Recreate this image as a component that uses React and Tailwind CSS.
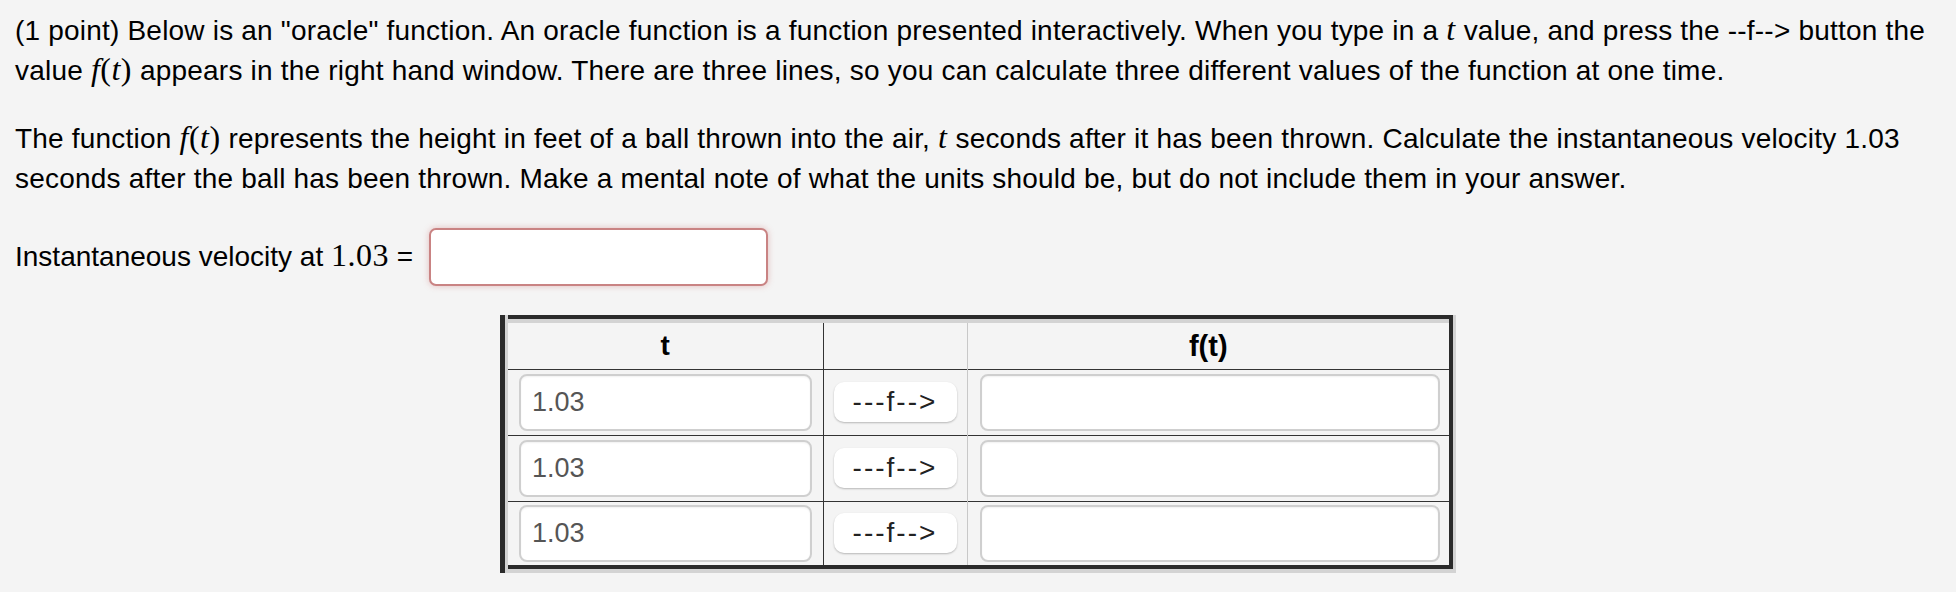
import React from 'react';

const M = ({ children }) => (
    <span className="font-['Liberation_Serif',serif] text-[32px] leading-none tracking-[0.5px]">{children}</span>
);

const Ft = () => (
    <M>
        <i>f</i>(<i>t</i>)
    </M>
);

const rows = ['1.03', '1.03', '1.03'];

const App = () => {
    return (
        <div className="min-h-screen bg-[#f4f4f4] px-[15px] pt-[11px] pb-8 font-['Liberation_Sans',Arial,sans-serif] text-[28px] leading-[40px] tracking-[0.2px] text-black">
            <p>
                (1 point) Below is an "oracle" function. An oracle function is a function presented interactively. When you type in a{' '}
                <M><i>t</i></M>{' '} value, and press the --f--&gt; button the value <Ft /> appears in the right hand window. There are three lines, so you can calculate three different values of the function at one time.
            </p>

            <p className="mt-[28px]">
                The function <Ft /> represents the height in feet of a ball thrown into the air, <M><i>t</i></M> seconds after it has been thrown. Calculate the instantaneous velocity 1.03 seconds after the ball has been thrown. Make a mental note of what the units should be, but do not include them in your answer.
            </p>

            {/* Answer */}
            <div className="mt-[29px] flex items-center gap-[16px]">
                <span className="tracking-normal">
                    Instantaneous velocity at <M>1.03</M> =
                </span>
                <input
                    type="text"
                    className="h-[58px] w-[339px] rounded-[7px] border-2 border-[#c98383] bg-white shadow-[0_0_6px_rgba(200,90,90,0.35)] outline-none"
                />
            </div>

            {/* Oracle table */}
            <div className="mx-auto mt-[29px] w-[956px] border-l-[5px] border-l-[#2b2b2b] bg-[#d3d3d3] pr-[3px] pl-[3px] pb-[4px]">
                <div className="border-t-4 border-r-4 border-b-4 border-[#2b2b2b] bg-[#d3d3d3] pt-[4px]">
                    <table className="w-full table-fixed border-collapse bg-[#f4f4f4] tracking-normal">
                        <colgroup>
                            <col className="w-[315px]" />
                            <col className="w-[144px]" />
                            <col />
                        </colgroup>
                        <thead>
                            <tr className="h-[46px] border-b border-[#333]">
                                <th className="border-r border-[#333] text-[28px] font-bold">t</th>
                                <th className="border-r border-[#c8c8c8]"></th>
                                <th className="text-[29px] font-bold">f(t)</th>
                            </tr>
                        </thead>
                        <tbody>
                            {rows.map((v, i) => (
                                <tr key={i} className={i < 2 ? 'h-[66px] border-b border-[#333]' : 'h-[64px]'}>
                                    <td className="border-r border-[#333] pl-[11px] pr-[11px]">
                                        <input
                                            type="text"
                                            defaultValue={v}
                                            className="h-[57px] w-full rounded-[8px] border-2 border-[#cfcfcf] bg-white pl-[11px] text-[27px] text-[#555] shadow-[inset_0_1px_2px_rgba(0,0,0,0.06)] outline-none"
                                        />
                                    </td>
                                    <td className="border-r border-[#c8c8c8] px-[10px]">
                                        <button className="h-[40px] w-[123px] rounded-[10px] bg-white text-[28px] leading-none tracking-[2px] text-[#222] shadow-[0_1px_2px_rgba(0,0,0,0.25)]">
                                            ---f--&gt;
                                        </button>
                                    </td>
                                    <td className="pl-[12px] pr-[9px]">
                                        <input
                                            type="text"
                                            className="h-[57px] w-full rounded-[8px] border-2 border-[#cfcfcf] bg-white shadow-[inset_0_1px_2px_rgba(0,0,0,0.06)] outline-none"
                                        />
                                    </td>
                                </tr>
                            ))}
                        </tbody>
                    </table>
                </div>
            </div>
        </div>
    );
};

export default App;
